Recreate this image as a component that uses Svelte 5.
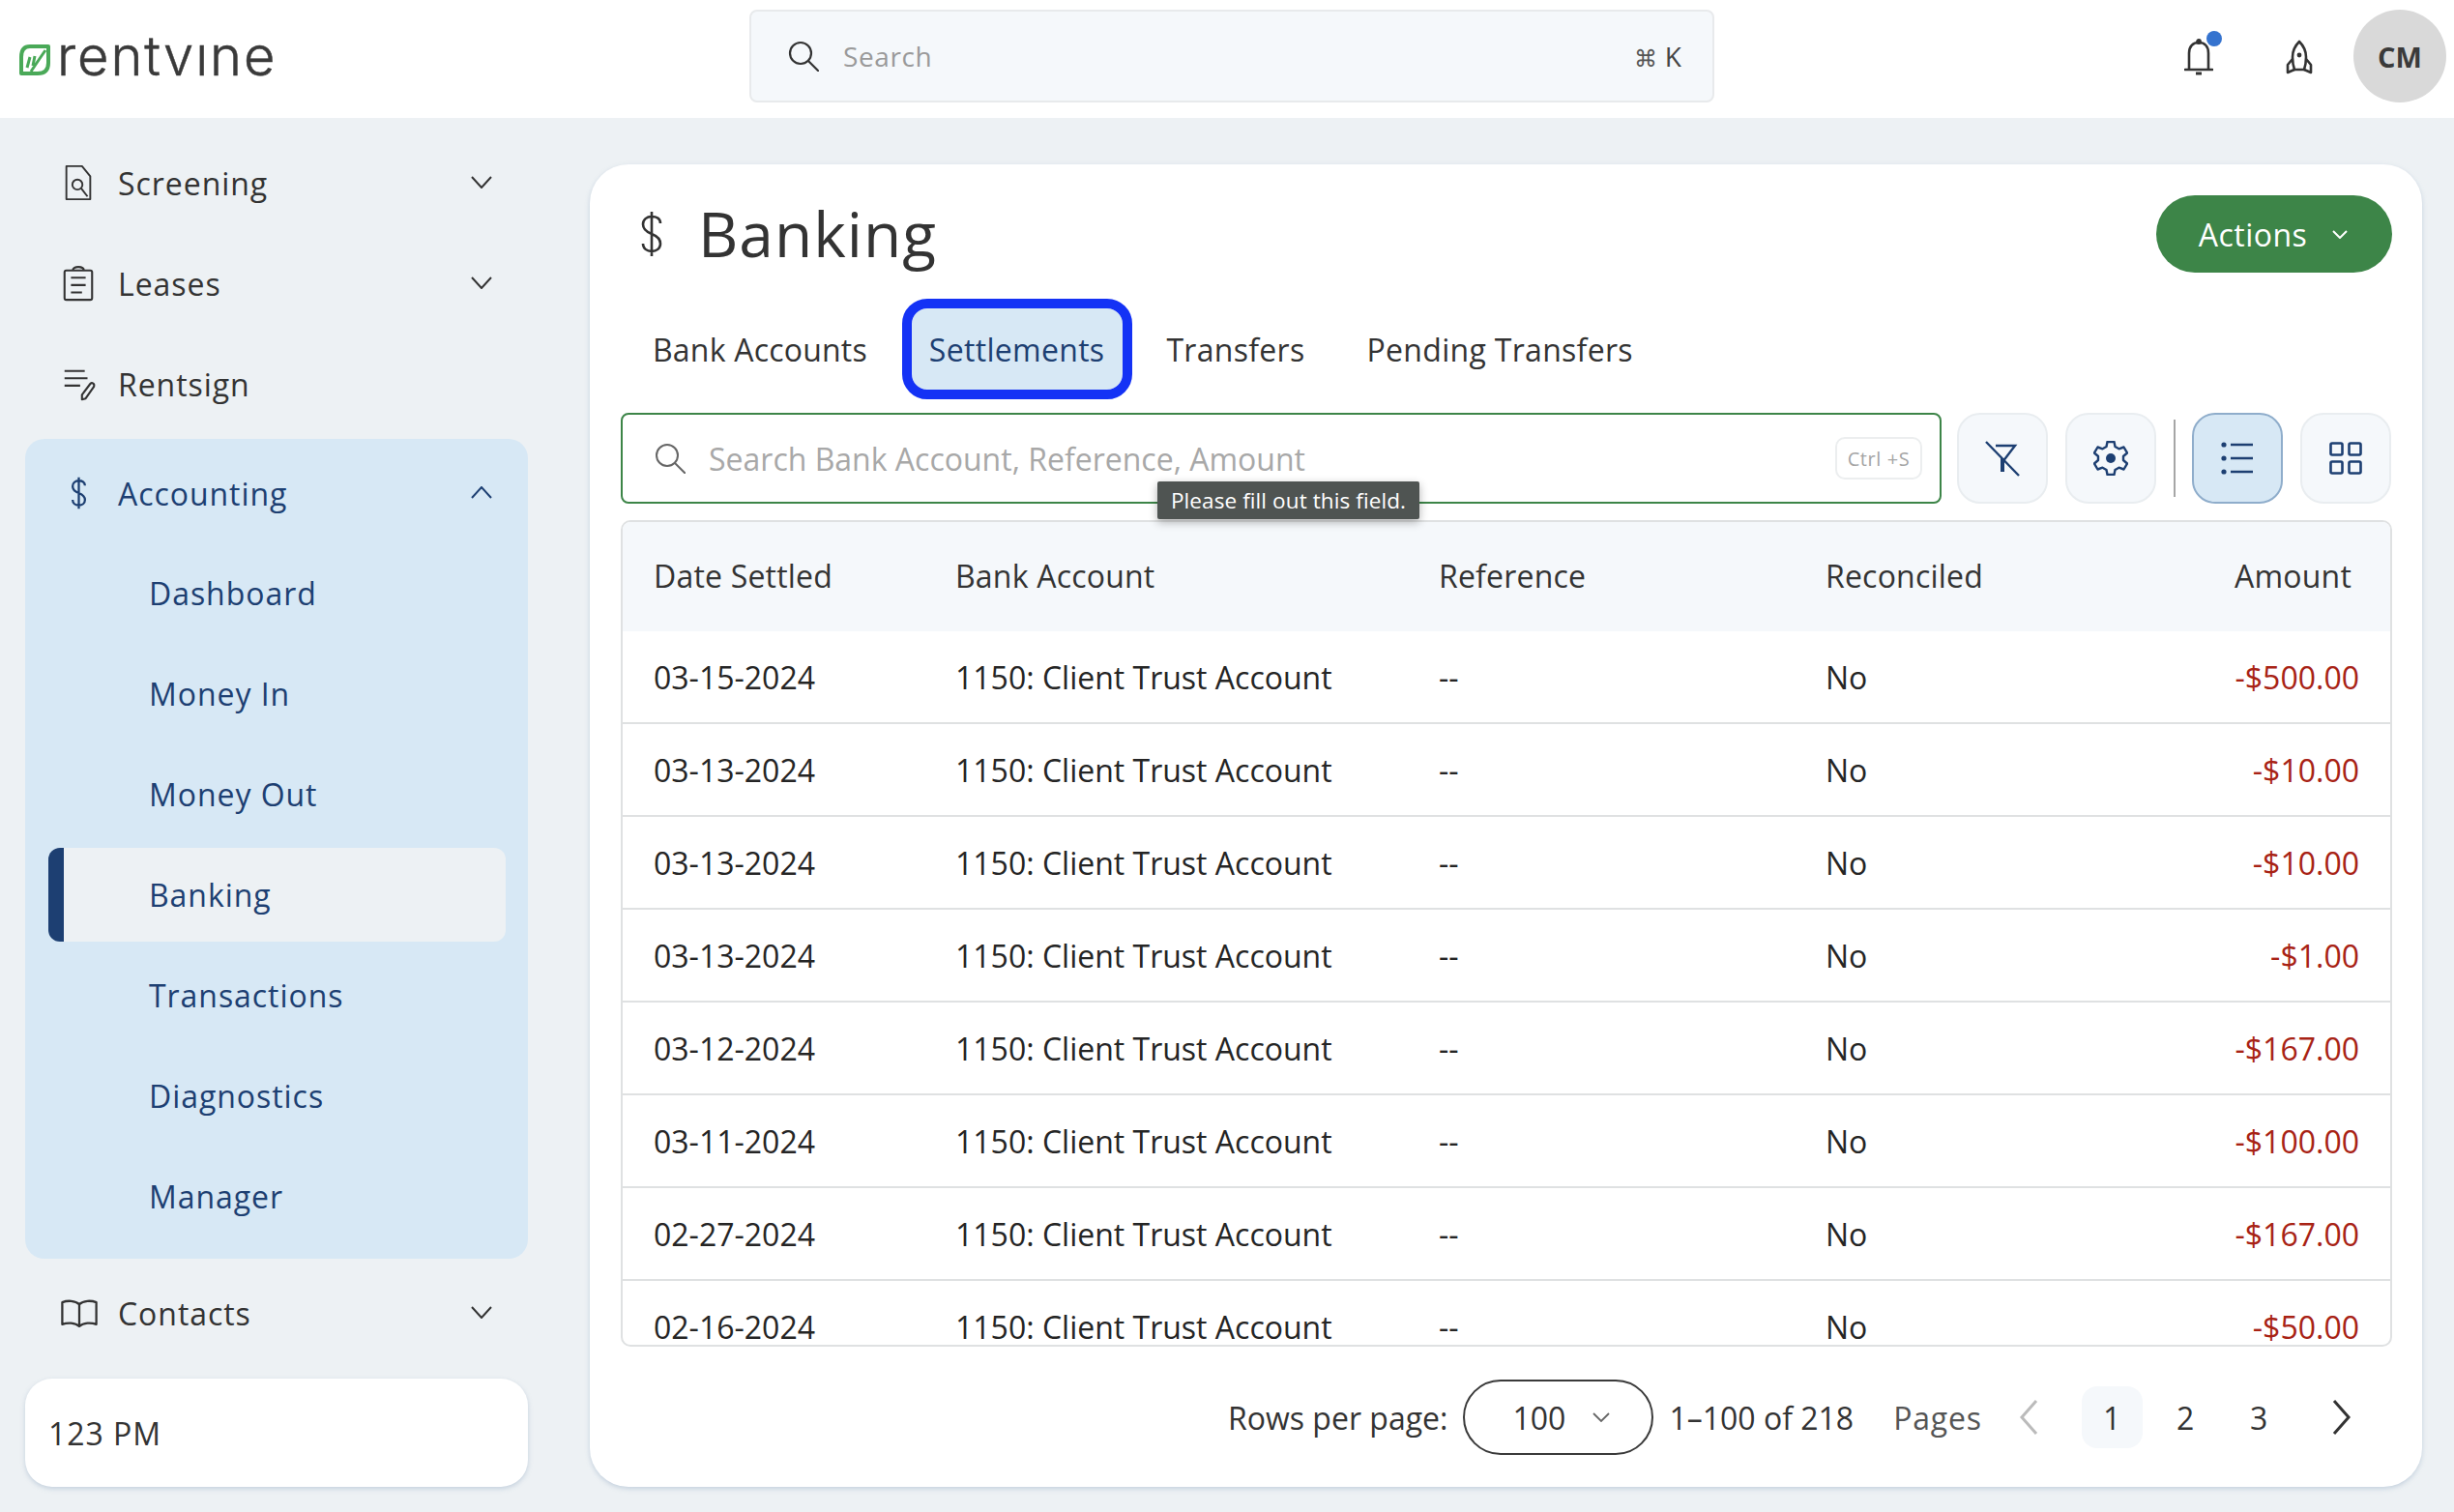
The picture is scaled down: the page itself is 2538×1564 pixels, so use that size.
<script>
  const rows = [
    ['03-15-2024', '-$500.00'],
    ['03-13-2024', '-$10.00'],
    ['03-13-2024', '-$10.00'],
    ['03-13-2024', '-$1.00'],
    ['03-12-2024', '-$167.00'],
    ['03-11-2024', '-$100.00'],
    ['02-27-2024', '-$167.00'],
    ['02-16-2024', '-$50.00']
  ];
  const subs = ['Dashboard', 'Money In', 'Money Out', 'Banking', 'Transactions', 'Diagnostics', 'Manager'];
  const dollar = 'M21 12C21 7 17 5 12 5C7 5 3 8 3 13C3 18 7 21 12 23C17 25 21 28 21 33C21 38 17 41 12 41C7 41 3 38 3 33M12 0V46';
</script>

<div class="page">
  <header class="top">
    <div class="brand">
      <svg class="leaf" viewBox="0 0 32 32" fill="none">
        <path d="M11 2H30V19Q30 30 19 30H2V13Q2 2 11 2Z" stroke="#4aa958" stroke-width="4" stroke-linejoin="round"/>
        <path d="M8 24L11 13M14 22L16 12M27 6Q22 13 12 28" stroke="#4aa958" stroke-width="3"/>
      </svg>
      <span class="wordmark">rentvıne</span>
    </div>
    <div class="global-search">
      <svg class="ic32" viewBox="0 0 32 32" fill="none" stroke="#333" stroke-width="2.2"><circle cx="13" cy="13" r="11"/><path d="M21 21L32 32"/></svg>
      <span class="gs-text">Search</span>
      <span class="gs-key"><span class="cmd">⌘</span> K</span>
    </div>
    <div class="top-right">
      <span class="bell">
        <svg width="30" height="38" viewBox="0 0 30 38" fill="none" stroke="#333" stroke-width="2.6">
          <path d="M5 32V15C5 8 9 4 15 4S25 8 25 15V32"/><path d="M1 32H29" stroke-linecap="round"/><circle cx="15" cy="3" r="1.6" fill="#333"/><path d="M12 36H18" stroke-width="3"/>
        </svg>
        <i class="dot"></i>
      </span>
      <svg class="rocket" width="28" height="36" viewBox="0 0 28 36" fill="none" stroke="#333" stroke-width="2.6" stroke-linejoin="round">
        <path d="M14 2C9 7 7 13 7 18C7 24 8 28 9 31H19C20 28 21 24 21 18C21 13 19 7 14 2Z"/>
        <path d="M7 20L2 26V34L9 31M21 20L26 26V34L19 31"/>
        <circle cx="14" cy="16" r="2.4" fill="#333" stroke="none"/>
      </svg>
      <div class="avatar">CM</div>
    </div>
  </header>

  <div class="body">
    <aside class="side">
      <div class="nav-item">
        <svg class="nav-ic" viewBox="0 0 40 40" fill="none" stroke="#333" stroke-width="2"><path d="M7 2H24L33 13V38H7Z" stroke-linejoin="round"/><circle cx="19" cy="22" r="5.5"/><path d="M23 26L30 35"/></svg>
        <span>Screening</span>
        <svg class="chev" viewBox="0 0 22 13" fill="none" stroke="#333" stroke-width="2"><path d="M1 1L11 12L21 1"/></svg>
      </div>
      <div class="nav-item">
        <svg class="nav-ic" viewBox="0 0 40 40" fill="none" stroke="#333" stroke-width="2.2"><rect x="5" y="6" width="30" height="32" rx="2"/><path d="M14 6C14 1 26 1 26 6"/><path d="M12 14H28M12 22H28M12 30H24"/></svg>
        <span>Leases</span>
        <svg class="chev" viewBox="0 0 22 13" fill="none" stroke="#333" stroke-width="2"><path d="M1 1L11 12L21 1"/></svg>
      </div>
      <div class="nav-item">
        <svg class="nav-ic" viewBox="0 0 40 40" fill="none" stroke="#333" stroke-width="2.2"><path d="M5 6H27M5 14H30M5 22H22"/><path d="M28 36L24 37L24 32L33 20C35 18 38 20 37 23Z" stroke-linejoin="round"/></svg>
        <span>Rentsign</span>
      </div>
      <div class="group">
        <div class="nav-item blue">
          <svg class="side-dollar" viewBox="0 0 24 46" fill="none" stroke="#1d3f72" stroke-width="3.2"><path d={dollar}/></svg>
          <span>Accounting</span>
          <svg class="chev" viewBox="0 0 22 13" fill="none" stroke="#1d3f72" stroke-width="2"><path d="M1 12L11 1L21 12"/></svg>
        </div>
        {#each subs as s}
          <div class="sub" class:active={s === 'Banking'}>{s}</div>
        {/each}
      </div>
      <div class="nav-item">
        <svg class="nav-ic book" viewBox="0 0 40 28" fill="none" stroke="#333" stroke-width="2.2" stroke-linejoin="round"><path d="M20 5C16 1 8 1 3 3V25C8 23 16 23 20 27C24 23 32 23 37 25V3C32 1 24 1 20 5Z"/><path d="M20 5V27"/></svg>
        <span>Contacts</span>
        <svg class="chev" viewBox="0 0 22 13" fill="none" stroke="#333" stroke-width="2"><path d="M1 1L11 12L21 1"/></svg>
      </div>
      <div class="pm-card">123 PM</div>
    </aside>

    <main class="card">
      <div class="title-row">
        <svg class="title-dollar" viewBox="0 0 24 46" fill="none" stroke="#333" stroke-width="2.6"><path d={dollar}/></svg>
        <h1>Banking</h1>
        <button class="actions">Actions
          <svg width="16" height="9" viewBox="0 0 16 9" fill="none" stroke="#fff" stroke-width="2"><path d="M1 1L8 8L15 1"/></svg>
        </button>
      </div>

      <nav class="tabs">
        <span class="tab">Bank Accounts</span>
        <span class="tab selected">Settlements</span>
        <span class="tab">Transfers</span>
        <span class="tab">Pending Transfers</span>
      </nav>

      <div class="tools">
        <div class="search">
          <svg class="ic32" viewBox="0 0 32 32" fill="none" stroke="#666" stroke-width="2"><circle cx="13" cy="13" r="11"/><path d="M21 21L32 32"/></svg>
          <span class="ph">Search Bank Account, Reference, Amount</span>
          <span class="kbd">Ctrl +S</span>
          <div class="tip">Please fill out this field.</div>
        </div>
        <button class="tool">
          <svg width="36" height="44" viewBox="0 0 36 44" fill="none" stroke="#1d3f72" stroke-width="2.4"><path d="M1 5L35 40"/><path d="M11 9H31L18 26"/><path d="M18 22V36" stroke-width="4"/></svg>
        </button>
        <button class="tool">
          <svg width="36" height="36" viewBox="0 0 36 36" fill="none" stroke="#1d3f72" stroke-width="2.4" stroke-linejoin="round">
            <path d="M14.5 1H21.5L22.5 6L26.5 8.3L31.5 6.5L35 12.5L31 16V20L35 23.5L31.5 29.5L26.5 27.7L22.5 30L21.5 35H14.5L13.5 30L9.5 27.7L4.5 29.5L1 23.5L5 20V16L1 12.5L4.5 6.5L9.5 8.3L13.5 6Z"/>
            <circle cx="18" cy="18" r="5" fill="#1d3f72" stroke="none"/>
          </svg>
        </button>
        <i class="sep"></i>
        <button class="tool on">
          <svg width="34" height="34" viewBox="0 0 34 34" fill="none" stroke="#1d3f72" stroke-width="2.6"><path d="M10 3H33M10 17H33M10 31H33"/><g fill="#1d3f72" stroke="none"><circle cx="3" cy="3" r="2.6"/><circle cx="3" cy="17" r="2.6"/><circle cx="3" cy="31" r="2.6"/></g></svg>
        </button>
        <button class="tool">
          <svg width="34" height="34" viewBox="0 0 34 34" fill="none" stroke="#1d3f72" stroke-width="2.6"><rect x="1.5" y="1.5" width="12" height="12" rx="1.5"/><rect x="20.5" y="1.5" width="12" height="12" rx="1.5"/><rect x="1.5" y="20.5" width="12" height="12" rx="1.5"/><rect x="20.5" y="20.5" width="12" height="12" rx="1.5"/></svg>
        </button>
      </div>

      <div class="table">
        <div class="tr head">
          <span>Date Settled</span><span>Bank Account</span><span>Reference</span><span>Reconciled</span><span class="num">Amount</span>
        </div>
        {#each rows as r}
          <div class="tr">
            <span>{r[0]}</span><span>1150: Client Trust Account</span><span>--</span><span>No</span><span class="num red">{r[1]}</span>
          </div>
        {/each}
      </div>

      <footer class="pager">
        <span>Rows per page:</span>
        <div class="select"><span>100</span>
          <svg width="18" height="10" viewBox="0 0 18 10" fill="none" stroke="#666" stroke-width="1.8"><path d="M1 1L9 9L17 1"/></svg>
        </div>
        <span class="range">1–100 of 218</span>
        <span class="pages">Pages</span>
        <svg class="prev" width="20" height="36" viewBox="0 0 20 36" fill="none" stroke="#bbb" stroke-width="3"><path d="M18 1L3 18L18 35"/></svg>
        <span class="pg cur">1</span><span class="pg">2</span><span class="pg">3</span>
        <svg class="next" width="20" height="36" viewBox="0 0 20 36" fill="none" stroke="#333" stroke-width="3"><path d="M2 1L17 18L2 35"/></svg>
      </footer>
    </main>
  </div>
</div>

<style>
  :global(body) { margin: 0; }
  .page {
    width: 2538px; height: 1564px; overflow: hidden; background: #edf1f4;
    font-family: "Open Sans", "Noto Sans", sans-serif; font-size: 32px; color: #333;
    letter-spacing: 0.2px;
  }
  button { font: inherit; letter-spacing: inherit; cursor: pointer; }
  .top { height: 122px; background: #fff; display: flex; align-items: center; position: relative; }
  .brand { width: 775px; display: flex; align-items: center; padding-left: 20px; box-sizing: border-box; height: 100%; }
  .leaf { width: 32px; height: 32px; margin-top: 2px; }
  .wordmark { font-family: Inter, "Open Sans", sans-serif; font-weight: 300; font-size: 56px; letter-spacing: 1.9px; color: #3a3a3a; margin-left: 7px; line-height: 1; margin-top: -6px; -webkit-text-stroke: 0.5px #3a3a3a; }
  .global-search {
    width: 998px; height: 96px; box-sizing: border-box; background: #f5f8fb; border: 2px solid #e8eaec; border-radius: 8px;
    display: flex; align-items: center; padding: 0 32px 0 38px; margin-top: -6px;
  }
  .ic32 { width: 32px; height: 32px; flex: none; }
  .gs-text { margin-left: 25px; font-size: 28px; color: #9a9a9a; letter-spacing: 0.6px; }
  .gs-key { margin-left: auto; font-size: 28px; color: #444; }
  .cmd { font-size: 24px; color: #555; font-family: "DejaVu Sans", sans-serif; }
  .top-right { flex: 1; display: flex; align-items: center; height: 100%; padding-left: 486px; margin-top: -6px; }
  .bell { position: relative; width: 30px; height: 38px; display: block; margin-top: 2px; }
  .bell svg { display: block; }
  .dot { position: absolute; left: 23px; top: -8px; width: 16px; height: 16px; border-radius: 50%; background: #3573cf; }
  .rocket { margin-left: 75px; flex: none; margin-top: 2px; }
  .avatar { position: absolute; left: 2434px; top: 10px; width: 96px; height: 96px; border-radius: 50%; background: #d9d9d9; display: flex; align-items: center; justify-content: center; font-weight: 700; font-size: 29px; color: #3a3a3a; letter-spacing: 0; }

  .body { display: flex; align-items: flex-start; padding: 19px 33px 0 26px; }
  .side { width: 520px; margin-right: 64px; flex: none; display: flex; flex-direction: column; gap: 8px; letter-spacing: 0.95px; }
  .nav-item { height: 96px; display: flex; align-items: center; position: relative; padding: 0 37px 0 96px; }
  .nav-item span { flex: 1; }
  .nav-ic { position: absolute; left: 36px; top: 29px; width: 38px; height: 38px; }
  .nav-ic.book { left: 35px; width: 42px; height: 29px; top: 34px; }
  .chev { width: 22px; height: 13px; flex: none; margin-top: -2px; }
  .group { background: #d7e8f5; border-radius: 20px; padding: 8px 0 16px; display: flex; flex-direction: column; gap: 7px; color: #1d3f72; margin-top: 1px; }
  .nav-item.blue { color: #1d3f72; }
  .side-dollar { position: absolute; left: 47px; top: 31px; width: 17px; height: 34px; }
  .sub { height: 97px; box-sizing: border-box; display: flex; align-items: center; margin: 0 23px 0 24px; padding-left: 104px; }
  .sub.active { background: #edf1f4; border-radius: 12px; border-left: 16px solid #1d3f72; padding-left: 88px; }
  .pm-card { height: 112px; margin-top: 12px; background: #fff; border-radius: 28px; box-shadow: 0 2px 5px rgba(120,150,180,.35); display: flex; align-items: center; padding-left: 24px; }

  .card { width: 1895px; height: 1368px; flex: none; box-sizing: border-box; margin-top: 29px; background: #fff; border-radius: 40px; box-shadow: 0 2px 5px rgba(120,150,180,.35); padding: 0 31px 0 32px; position: relative; }
  .title-row { height: 138px; display: flex; align-items: center; padding-top: 8px; box-sizing: border-box; }
  .title-dollar { width: 24px; height: 46px; flex: none; margin: -2px 36px 0 20px; }
  h1 { margin: -2px 0 0; font-size: 64px; font-weight: 400; letter-spacing: 1px; line-height: 1; flex: 1; color: #333; }
  .actions { width: 244px; height: 80px; border: 0; border-radius: 40px; background: #3d8548; color: #fff; display: flex; align-items: center; justify-content: center; gap: 26px; padding: 0 2px 0 0; margin-top: -2px; letter-spacing: 0.5px; }

  .tabs { display: flex; align-items: center; height: 84px; margin-top: 11px; padding-left: 15px; }
  .tab { padding: 0 18px; height: 84px; display: flex; align-items: center; box-sizing: border-box; margin-right: 28px; white-space: nowrap; letter-spacing: 0.3px; }
  .tab:first-child { letter-spacing: 0.2px; }
  .tab.selected { background: #d7e8f5; color: #1d3f72; border-radius: 16px; outline: 10px solid #1432f5; margin-right: 27px; padding: 0 19px 0 18px; }

  .tools { display: flex; align-items: center; margin-top: 24px; height: 94px; }
  .search { width: 1366px; height: 94px; box-sizing: border-box; border: 2.5px solid #3d8548; border-radius: 8px; display: flex; align-items: center; padding: 0 18px 0 33px; position: relative; margin-right: 16px; }
  .ph { color: #a8a8a8; margin-left: 24px; flex: 1; letter-spacing: 0; }
  .kbd { width: 90px; height: 44px; box-sizing: border-box; border: 2px solid #eceeef; border-radius: 10px; font-size: 20px; color: #a5a5a5; display: flex; align-items: center; justify-content: center; letter-spacing: 0.6px; }
  .tip { position: absolute; left: 553px; top: 69px; width: 271px; height: 39px; background: #4f5452; color: #fff; font-size: 22.5px; display: flex; align-items: center; justify-content: center; box-shadow: 0 3px 10px rgba(0,0,0,.3); border-radius: 2px; letter-spacing: 0.1px; z-index: 2; white-space: nowrap; }
  .tool { width: 94px; height: 94px; box-sizing: border-box; border: 2px solid #e9edf0; border-radius: 24px; background: #f5f8fb; display: flex; align-items: center; justify-content: center; padding: 0; margin-right: 18px; }
  .tool:last-child { margin-right: 0; }
  .tool.on { background: #d7e8f5; border-color: #8fadcb; }
  .sep { width: 2px; height: 80px; background: #a6a6a6; margin-right: 17px; }

  .table { margin-top: 17px; height: 855px; box-sizing: border-box; border: 2.5px solid #dfe1e2; border-radius: 10px; overflow: hidden; }
  .tr { display: grid; grid-template-columns: 312px 500px 400px 1fr 300px; padding: 0 32px; height: 96px; align-items: center; border-bottom: 2.5px solid #dfe1e2; box-sizing: border-box; color: #252525; letter-spacing: 0; }
  .tr.head { height: 113px; background: #f5f8fb; border-bottom: 0; color: #333; padding: 0 40px 2px 32px; letter-spacing: 0.2px; }
  .num { text-align: right; }
  .red { color: #a82315; }

  .pager { position: absolute; left: 660px; right: 73px; top: 1257px; height: 78px; display: flex; align-items: center; color: #333; white-space: nowrap; letter-spacing: 0; }
  .select { width: 197px; height: 78px; flex: none; margin-left: 16px; box-sizing: border-box; border: 2.5px solid #3a3a3a; border-radius: 39px; display: flex; align-items: center; padding-left: 49px; margin-right: 16px; }
  .select svg { margin-left: 28px; }
  .pages { margin-left: 41px; color: #555; letter-spacing: 0.8px; }
  .prev { margin-left: 38px; margin-right: 45px; flex: none; }
  .pg { width: 63px; height: 64px; display: flex; align-items: center; justify-content: center; border-radius: 16px; margin-right: 13px; flex: none; }
  .pg.cur { background: #f5f8fb; }
  .next { margin-left: 31px; flex: none; }
</style>
